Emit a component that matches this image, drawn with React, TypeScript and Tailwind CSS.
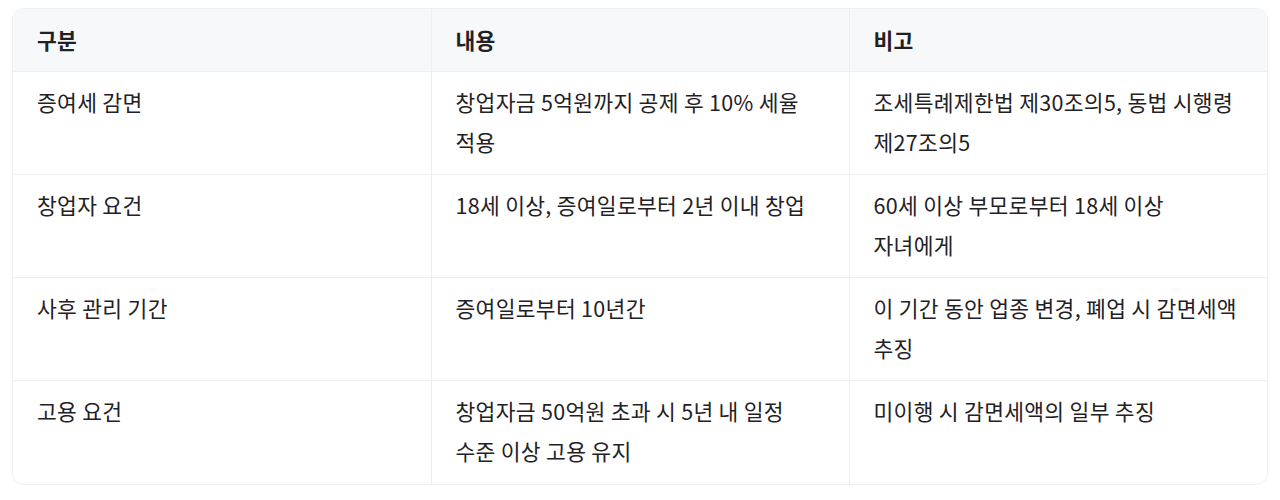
const columns = ["구분", "내용", "비고"];

const rows: string[][] = [
  ["증여세 감면", "창업자금 5억원까지 공제 후 10% 세율 적용", "조세특례제한법 제30조의5, 동법 시행령 제27조의5"],
  ["창업자 요건", "18세 이상, 증여일로부터 2년 이내 창업", "60세 이상 부모로부터 18세 이상 자녀에게"],
  ["사후 관리 기간", "증여일로부터 10년간", "이 기간 동안 업종 변경, 폐업 시 감면세액 추징"],
  ["고용 요건", "창업자금 50억원 초과 시 5년 내 일정 수준 이상 고용 유지", "미이행 시 감면세액의 일부 추징"],
];

function App() {
  return (
    <div className="bg-white px-3 pt-2 font-['Noto_Sans_CJK_KR','Noto_Sans',sans-serif] text-[#1f2125]">
      <div className="overflow-hidden rounded-xl border border-[#eceef1]">
        <table className="w-full table-fixed border-collapse text-left text-[21.5px] leading-[40px] tracking-[0.3px] break-keep">
          <thead className="bg-[#f7f8fa]">
            <tr>
              {columns.map((c, i) => (
                <th
                  key={c}
                  className={`h-[62px] px-6 py-[11px] align-top font-semibold ${i > 0 ? "border-l border-[#eceef1]" : ""}`}
                >
                  {c}
                </th>
              ))}
            </tr>
          </thead>
          <tbody>
            {rows.map((r) => (
              <tr key={r[0]} className="border-t border-[#eceef1]">
                {r.map((cell, i) => (
                  <td
                    key={i}
                    className={`h-[103px] px-6 py-[10px] align-top font-normal ${i > 0 ? "border-l border-[#eceef1]" : ""}`}
                  >
                    {cell}
                  </td>
                ))}
              </tr>
            ))}
          </tbody>
        </table>
      </div>
    </div>
  );
}

export default App;
